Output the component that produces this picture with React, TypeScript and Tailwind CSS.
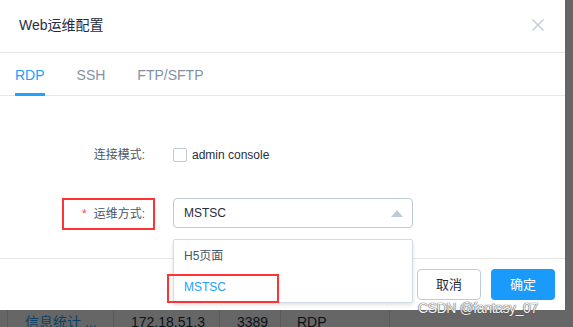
import { useState } from "react";

const font = "font-['Liberation_Sans','Noto_Sans_CJK_SC',sans-serif]";

const tabs = ["RDP", "SSH", "FTP/SFTP"];

const options = [
  { label: "H5页面", value: "h5" },
  { label: "MSTSC", value: "mstsc" },
];

function CloseIcon() {
  return (
    <svg width="12" height="12" viewBox="0 0 12 12" fill="none">
      <path d="M0.5 0.5L11.5 11.5M11.5 0.5L0.5 11.5" stroke="#bfcbd9" strokeWidth="1.4" />
    </svg>
  );
}

export default function App() {
  const [active, setActive] = useState("RDP");
  const [mode, setMode] = useState("mstsc");

  return (
    <div className={`relative flex h-[327px] w-[573px] flex-col overflow-hidden bg-[#666666] ${font}`}>
      <div className="flex h-[310px] w-[565px] flex-col bg-white">
        {/* header */}
        <div className="flex h-[53px] items-center justify-between border-b border-[#e6e6e6] pb-[2px] pl-[19px] pr-[21px]">
          <span className="text-[14px] text-[#1f2d3d]">Web运维配置</span>
          <CloseIcon />
        </div>

        {/* tabs */}
        <div className="flex h-[43px] gap-[32px] border-b border-[#e4e7ed] pl-[15px]">
          {tabs.map((t) => (
            <button
              key={t}
              onClick={() => setActive(t)}
              className={`-mb-px flex items-center border-b-[3px] pt-[4px] text-[14px] ${
                active === t
                  ? "border-[#20a0ff] text-[#20a0ff]"
                  : "border-transparent text-[#8391a5]"
              }`}
            >
              {t}
            </button>
          ))}
        </div>

        {/* form */}
        <div className="flex flex-1 flex-col gap-[28px] pt-[44px] text-[12px]">
          <div className="flex h-[30px] items-center">
            <div className="ml-[62px] flex w-[93px] justify-end border-2 border-transparent pr-[8px] text-[#48576a]">
              连接模式:
            </div>
            <label className="ml-[18px] flex items-center gap-[5px] text-[#1f2d3d]">
              <span className="h-[14px] w-[14px] rounded-[2px] border border-[#bfcbd9] bg-white" />
              admin console
            </label>
          </div>

          <div className="flex items-start">
            <div className="ml-[62px] flex h-[32px] w-[93px] items-center justify-end border-2 border-[#ff3333] pr-[8px] text-[#48576a]">
              <span className="mr-[7px] text-[#ff4949]">*</span>
              运维方式:
            </div>
            <div className="ml-[18px] flex h-[30px] w-[240px] items-center justify-between rounded-[4px] border border-[#bfcbd9] pl-[10px] pr-[9px] text-[#1f2d3d]">
              <span>MSTSC</span>
              <svg width="12" height="7" viewBox="0 0 12 7">
                <path d="M6 0L12 7H0Z" fill="#bfcbd9" />
              </svg>
            </div>
          </div>
        </div>

        {/* footer */}
        <div className="flex h-[52px] items-center justify-end gap-[10px] border-t border-[#e6e6e6] pr-[10px] text-[13px]">
          <button className="h-[31px] w-[64px] rounded-[4px] border border-[#bfcbd9] bg-white text-[#1f2d3d]">取消</button>
          <button className="h-[31px] w-[64px] rounded-[4px] bg-[#1a9bfc] text-white">确定</button>
        </div>
      </div>

      {/* table row behind the mask */}
      <div className="flex h-[17px] pl-[7px] text-[14px] leading-[14px] text-[#0c1218]">
        <div className="w-[106px] border-l border-[#5a5a5a] pl-[17px] pt-[5px] text-[#0d4066]">信息统计 ...</div>
        <div className="w-[106px] border-l border-[#5a5a5a] pl-[17px] pt-[5px]">172.18.51.3</div>
        <div className="w-[61px] border-l border-[#5a5a5a] pl-[17px] pt-[5px]">3389</div>
        <div className="w-[109px] border-l border-[#5a5a5a] pl-[16px] pt-[5px]">RDP</div>
        <div className="flex-1 border-l border-[#5a5a5a]" />
      </div>

      {/* dropdown */}
      <div className="absolute left-[173px] top-[239px] w-[240px] rounded-[2px] border border-[#d1dbe5] bg-white text-[12px] shadow-[0_2px_4px_rgba(0,0,0,0.12)]">
        {options.map((o) => (
          <div
            key={o.value}
            onClick={() => setMode(o.value)}
            className={`flex h-[31px] items-center pl-[10px] ${mode === o.value ? "text-[#20a0ff]" : "text-[#48576a]"}`}
          >
            {o.label}
          </div>
        ))}
      </div>
      <div className="absolute left-[167px] top-[274px] h-[29px] w-[112px] border-2 border-[#ff3333]" />

      {/* watermark */}
      <div className="absolute left-[418px] top-[298px] text-[14px] tracking-[-0.4px] text-[#f4f4f4] [text-shadow:0_0_1px_#444,0_0_1px_#444]">
        CSDN @fantasy_07
      </div>
    </div>
  );
}
